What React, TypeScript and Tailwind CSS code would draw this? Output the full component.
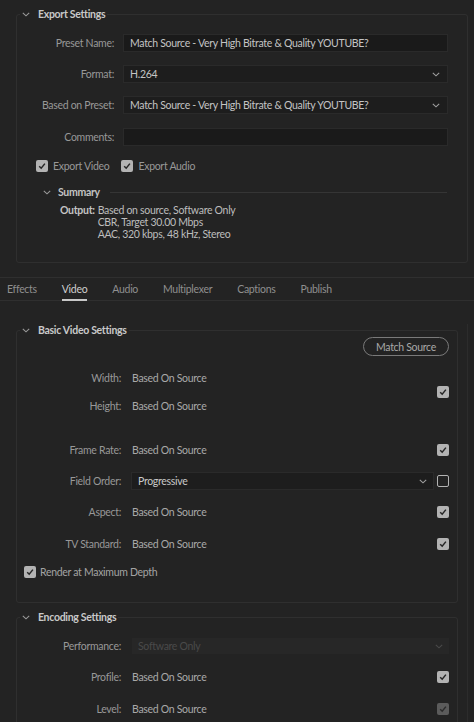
import React from "react";

const Chevron = ({ className = "" }: { className?: string }) => (
  <svg width="8" height="5" viewBox="0 0 8 5" className={className}>
    <path d="M0.8 0.8 L4 3.8 L7.2 0.8" fill="none" stroke="currentColor" strokeWidth="1.1" />
  </svg>
);

const Check = ({ checked = true, dim = false }: { checked?: boolean; dim?: boolean }) =>
  checked ? (
    <span
      className={`flex h-3 w-3 shrink-0 items-center justify-center rounded-[2px] ${
        dim ? "bg-[#5b5b5b]" : "bg-[#b3b3b3]"
      }`}
    >
      <svg width="10" height="10" viewBox="0 0 10 10">
        <path
          d="M2.2 5.2 L4.2 7.2 L7.9 2.6"
          fill="none"
          stroke={dim ? "#2c2c2c" : "#262626"}
          strokeWidth="1.5"
        />
      </svg>
    </span>
  ) : (
    <span className="block h-3 w-3 shrink-0 rounded-[2px] border-[1.5px] border-[#b3b3b3]" />
  );

const Legend = ({ title }: { title: string }) => (
  <legend className="ml-[3px] flex h-3 items-center gap-[8px] px-[2px] text-[#c9c9c9]">
    <Chevron className="text-[#9a9a9a]" />
    <span className="font-bold leading-3">{title}</span>
  </legend>
);

const FieldRow = ({ label, children, lw, className = "" }: { label: string; children: React.ReactNode; lw: string; className?: string }) => (
  <div className={`flex h-4 items-center ${className}`}>
    <div className={`${lw} shrink-0 text-right text-[#989898]`}>{label}</div>
    {children}
  </div>
);

export default function App() {
  return (
    <div
      className="h-[722px] w-[474px] overflow-hidden bg-[#232323] text-[10.5px] leading-4 tracking-[-0.3px] text-[#bdbdbd]"
      style={{ fontFamily: "Lato, 'Open Sans', sans-serif" }}
    >
      {/* Export Settings */}
      <fieldset className="ml-4 mt-2 w-[452px] rounded-[3px] border border-[#2f2f2f] pb-[22px]">
        <Legend title="Export Settings" />
        <FieldRow label="Preset Name:" lw="w-[97px]" className="mt-[15px]">
          <div className="ml-[10px] flex h-4 w-[323px] items-center bg-[#1a1a1a] px-[6px] text-[#c4c4c4] outline outline-1 outline-[#2a2a2a]">
            Match Source - Very High Bitrate &amp; Quality YOUTUBE?
          </div>
        </FieldRow>
        <FieldRow label="Format:" lw="w-[97px]" className="mt-[15px]">
          <div className="ml-[10px] flex h-4 w-[323px] items-center justify-between bg-[#1d1d1d] px-[6px] text-[#c4c4c4] outline outline-1 outline-[#2a2a2a]">
            <span>H.264</span>
            <Chevron className="mr-[1px] text-[#a0a0a0]" />
          </div>
        </FieldRow>
        <FieldRow label="Based on Preset:" lw="w-[97px]" className="mt-[15px]">
          <div className="ml-[10px] flex h-4 w-[323px] items-center justify-between bg-[#1d1d1d] px-[6px] text-[#c4c4c4] outline outline-1 outline-[#2a2a2a]">
            <span>Match Source - Very High Bitrate &amp; Quality YOUTUBE?</span>
            <Chevron className="mr-[1px] text-[#a0a0a0]" />
          </div>
        </FieldRow>
        <FieldRow label="Comments:" lw="w-[97px]" className="mt-[16px]">
          <div className="ml-[10px] h-4 w-[323px] bg-[#1a1a1a] outline outline-1 outline-[#2a2a2a]" />
        </FieldRow>
        <div className="mt-[15px] flex h-3 items-center pl-[19px] text-[#989898]">
          <Check />
          <span className="ml-[5px]">Export Video</span>
          <span className="ml-[12px]"><Check /></span>
          <span className="ml-[5px]">Export Audio</span>
        </div>
        <div className="mt-[14px] flex h-3 items-center pl-[26px]">
          <Chevron className="text-[#9a9a9a]" />
          <span className="ml-[7px] font-bold text-[#c4c4c4]">Summary</span>
          <div className="ml-[10px] mr-[20px] h-px flex-1 bg-[#353535]" />
        </div>
        <div className="mt-[6px] flex pl-[43px] leading-3 text-[#bdbdbd]">
          <span className="font-bold text-[#c4c4c4]">Output:</span>
          <div className="ml-[3px]">
            <div>Based on source, Software Only</div>
            <div>CBR, Target 30.00 Mbps</div>
            <div>AAC, 320 kbps, 48 kHz, Stereo</div>
          </div>
        </div>
      </fieldset>

      {/* Tabs */}
      <div className="mt-[14px] flex h-[24px] items-center gap-[25px] border-y border-[#2f2f2f] pl-[7px] text-[#8f8f8f]">
        <span>Effects</span>
        <span className="relative text-[#cfcfcf]">
          Video
          <span className="absolute -bottom-[4px] left-0 right-0 h-[2px] bg-[#c8c8c8]" />
        </span>
        <span>Audio</span>
        <span>Multiplexer</span>
        <span>Captions</span>
        <span>Publish</span>
      </div>

      <div className="w-[468px] border-r border-[#2c2c2c]">
        {/* Basic Video Settings */}
        <fieldset className="ml-4 mt-[23px] w-[442px] rounded-[3px] border border-[#2f2f2f] pb-[22px]">
          <Legend title="Basic Video Settings" />
          <div className="mt-px flex justify-end pr-[8px]">
            <div className="flex h-[19px] w-[86px] items-center justify-center rounded-full border border-[#7a7a7a] text-[#a9a9a9]">
              Match Source
            </div>
          </div>
          <div className="mt-[14px] flex items-center">
            <div className="flex-1">
              <FieldRow label="Width:" lw="w-[104px]">
                <span className="ml-[11px] text-[#a9a9a9]">Based On Source</span>
              </FieldRow>
              <FieldRow label="Height:" lw="w-[104px]" className="mt-[12px]">
                <span className="ml-[11px] text-[#a9a9a9]">Based On Source</span>
              </FieldRow>
            </div>
            <div className="mr-[8px]"><Check /></div>
          </div>
          <FieldRow label="Frame Rate:" lw="w-[104px]" className="mt-[28px]">
            <span className="ml-[11px] flex-1 text-[#a9a9a9]">Based On Source</span>
            <div className="mr-[8px]"><Check /></div>
          </FieldRow>
          <FieldRow label="Field Order:" lw="w-[104px]" className="mt-[15px]">
            <div className="ml-[11px] flex h-4 w-[301px] items-center justify-between bg-[#1d1d1d] px-[6px] text-[#c9c9c9] outline outline-1 outline-[#2a2a2a]">
              <span>Progressive</span>
              <Chevron className="text-[#a0a0a0]" />
            </div>
            <div className="ml-[4px]"><Check checked={false} /></div>
          </FieldRow>
          <FieldRow label="Aspect:" lw="w-[104px]" className="mt-[15px]">
            <span className="ml-[11px] flex-1 text-[#a9a9a9]">Based On Source</span>
            <div className="mr-[8px]"><Check /></div>
          </FieldRow>
          <FieldRow label="TV Standard:" lw="w-[104px]" className="mt-[16px]">
            <span className="ml-[11px] flex-1 text-[#a9a9a9]">Based On Source</span>
            <div className="mr-[8px]"><Check /></div>
          </FieldRow>
          <div className="mt-[12px] flex h-4 items-center pl-[7px] text-[#a3a3a3]">
            <Check />
            <span className="ml-[4px]">Render at Maximum Depth</span>
          </div>
        </fieldset>

        {/* Encoding Settings */}
        <fieldset className="ml-4 mt-[8px] w-[442px] rounded-[3px] border border-[#2f2f2f] pb-[23px]">
          <Legend title="Encoding Settings" />
          <FieldRow label="Performance:" lw="w-[104px]" className="mt-[15px]">
            <div className="ml-[11px] flex h-4 w-[317px] items-center justify-between bg-[#272727] px-[6px] text-[#4a4a4a]">
              <span>Software Only</span>
              <Chevron className="text-[#4a4a4a]" />
            </div>
          </FieldRow>
          <FieldRow label="Profile:" lw="w-[104px]" className="mt-[15px]">
            <span className="ml-[11px] flex-1 text-[#a9a9a9]">Based On Source</span>
            <div className="mr-[8px]"><Check /></div>
          </FieldRow>
          <FieldRow label="Level:" lw="w-[104px]" className="mt-[16px]">
            <span className="ml-[11px] flex-1 text-[#a9a9a9]">Based On Source</span>
            <div className="mr-[8px]"><Check dim /></div>
          </FieldRow>
        </fieldset>
      </div>
    </div>
  );
}
